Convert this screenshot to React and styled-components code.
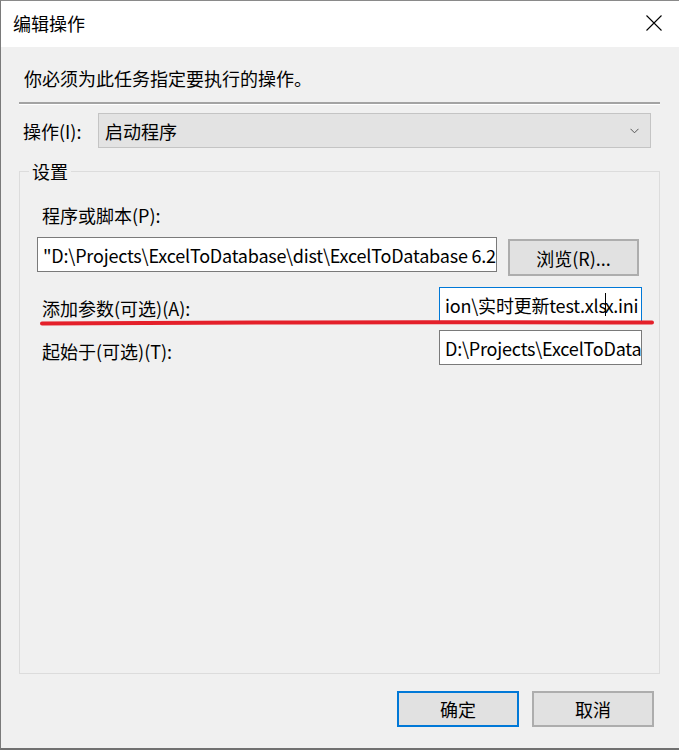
import React from "react";
import styled, { createGlobalStyle } from "styled-components";

const GlobalStyle = createGlobalStyle`
  html, body { margin: 0; padding: 0; background: #f0f0f0; }
  * { box-sizing: border-box; }
  body {
    font-family: "Noto Sans CJK SC", "Noto Sans", sans-serif;
    color: #000;
  }
`;

const Window = styled.div`
  position: relative;
  width: 679px;
  height: 750px;
  display: flex;
  flex-direction: column;
  background: #f0f0f0;
  border-top: 1px solid #8a8a8a;
  border-left: 1px solid #7a7a7a;
  border-bottom: 2px solid #707070;
  overflow: hidden;
`;

const TitleBar = styled.div`
  height: 46px;
  flex: none;
  background: #fff;
  display: flex;
  align-items: center;
  justify-content: space-between;
  padding: 0 17px 2px 12px;
`;

const Title = styled.div`
  font-size: 18px;
  line-height: 24px;
`;

const CloseIcon = styled.svg`
  width: 16px;
  height: 16px;
  display: block;
`;

const Body = styled.div`
  flex: 1;
  display: flex;
  flex-direction: column;
  padding: 0 19px 0 18px;
`;

const Text = styled.div`
  font-size: 18px;
  line-height: 24px;
  white-space: nowrap;
`;

const Intro = styled(Text)`
  margin-top: 19px;
  padding-left: 5px;
`;

const Separator = styled.div`
  margin-top: 12px;
  height: 3px;
  border-top: 2px solid #a3a3a3;
  border-bottom: 1px solid #ffffff;
`;

const ActionRow = styled.div`
  margin-top: 8px;
  display: flex;
  align-items: center;
`;

const ActionLabel = styled(Text)`
  width: 79px;
  padding-left: 4px;
  flex: none;
`;

const Combo = styled.div`
  width: 553px;
  height: 35px;
  display: flex;
  align-items: center;
  justify-content: space-between;
  padding: 0 11px 0 6px;
  background: #e3e3e3;
  border: 1px solid #c4c4c4;
  font-size: 18px;
`;

const Chevron = styled.svg`
  width: 9px;
  height: 6px;
  display: block;
`;

const Group = styled.fieldset`
  flex: 1;
  margin: 11px 0 0 0;
  padding: 0 17px 0 17px;
  border: 1px solid #dcdcdc;
  min-width: 0;
  display: flex;
  flex-direction: column;
`;

const Legend = styled.legend`
  font-size: 18px;
  line-height: 24px;
  padding: 0 3px;
  margin-left: -8px;
`;

const FieldLabel = styled(Text)`
  padding-left: 5px;
  margin-top: ${(p) => p.$mt || 0}px;
`;

const Row = styled.div`
  display: flex;
  align-items: ${(p) => p.$align || "center"};
  justify-content: ${(p) => p.$justify || "flex-start"};
  margin-top: ${(p) => p.$mt || 0}px;
`;

const RowLabel = styled(Text)`
  padding-left: 5px;
  padding-top: 6px;
`;

const Input = styled.div`
  width: ${(p) => p.$w}px;
  height: 35px;
  flex: none;
  display: flex;
  align-items: center;
  padding-left: 5px;
  background: #fff;
  border: 1px solid ${(p) => (p.$focused ? "#0078d7" : "#7a7a7a")};
  font-size: 18px;
  letter-spacing: -0.2px;
  white-space: nowrap;
  overflow: hidden;
`;

const Caret = styled.span`
  display: inline-block;
  width: 1px;
  height: 23px;
  background: #000;
  margin: 0 -1px 0 -2px;
  vertical-align: middle;
`;

const Button = styled.div`
  width: ${(p) => p.$w}px;
  height: ${(p) => p.$h}px;
  flex: none;
  display: flex;
  align-items: center;
  justify-content: center;
  background: #e1e1e1;
  border: 2px solid ${(p) => (p.$primary ? "#0078d7" : "#adadad")};
  font-size: 18px;
  margin-left: ${(p) => p.$ml || 0}px;
  margin-top: ${(p) => p.$mt || 0}px;
`;

const ButtonRow = styled.div`
  display: flex;
  justify-content: flex-end;
  gap: 13px;
  margin: 17px 0 21px 0;
  padding-right: 6px;
`;

const Annotation = styled.svg`
  position: absolute;
  left: 0;
  top: 0;
  width: 679px;
  height: 750px;
  pointer-events: none;
`;

export default function App() {
  return (
    <>
      <GlobalStyle />
      <Window>
        <TitleBar>
          <Title>编辑操作</Title>
          <CloseIcon viewBox="0 0 16 16">
            <path d="M0.5 0.5 L15.5 15.5 M15.5 0.5 L0.5 15.5" stroke="#000" strokeWidth="1.1" fill="none" />
          </CloseIcon>
        </TitleBar>
        <Body>
          <Intro>你必须为此任务指定要执行的操作。</Intro>
          <Separator />
          <ActionRow>
            <ActionLabel>操作(I):</ActionLabel>
            <Combo>
              <span>启动程序</span>
              <Chevron viewBox="0 0 9 6">
                <path d="M0.5 0.8 L4.5 4.8 L8.5 0.8" stroke="#555" strokeWidth="1" fill="none" />
              </Chevron>
            </Combo>
          </ActionRow>
          <Group>
            <Legend>设置</Legend>
            <FieldLabel $mt={20}>程序或脚本(P):</FieldLabel>
            <Row $align="flex-start" $mt={10}>
              <Input $w={460}>"D:\Projects\ExcelToDatabase\dist\ExcelToDatabase 6.2</Input>
              <Button $w={131} $h={37} $ml={11} $mt={2}>浏览(R)...</Button>
            </Row>
            <Row $justify="space-between" $mt={11}>
              <RowLabel>添加参数(可选)(A):</RowLabel>
              <Input $w={203} $focused>
                ion\实时更新test.xls<Caret />x.ini
              </Input>
            </Row>
            <Row $justify="space-between" $mt={8}>
              <RowLabel>起始于(可选)(T):</RowLabel>
              <Input $w={203}>D:\Projects\ExcelToData</Input>
            </Row>
          </Group>
          <ButtonRow>
            <Button $w={122} $h={36} $primary>确定</Button>
            <Button $w={122} $h={36}>取消</Button>
          </ButtonRow>
        </Body>
        <Annotation viewBox="0 0 679 750">
          <path d="M41 322.5 Q 300 320.5 651 321.5" stroke="#e4202a" strokeWidth="4" strokeLinecap="round" fill="none" />
        </Annotation>
      </Window>
    </>
  );
}
